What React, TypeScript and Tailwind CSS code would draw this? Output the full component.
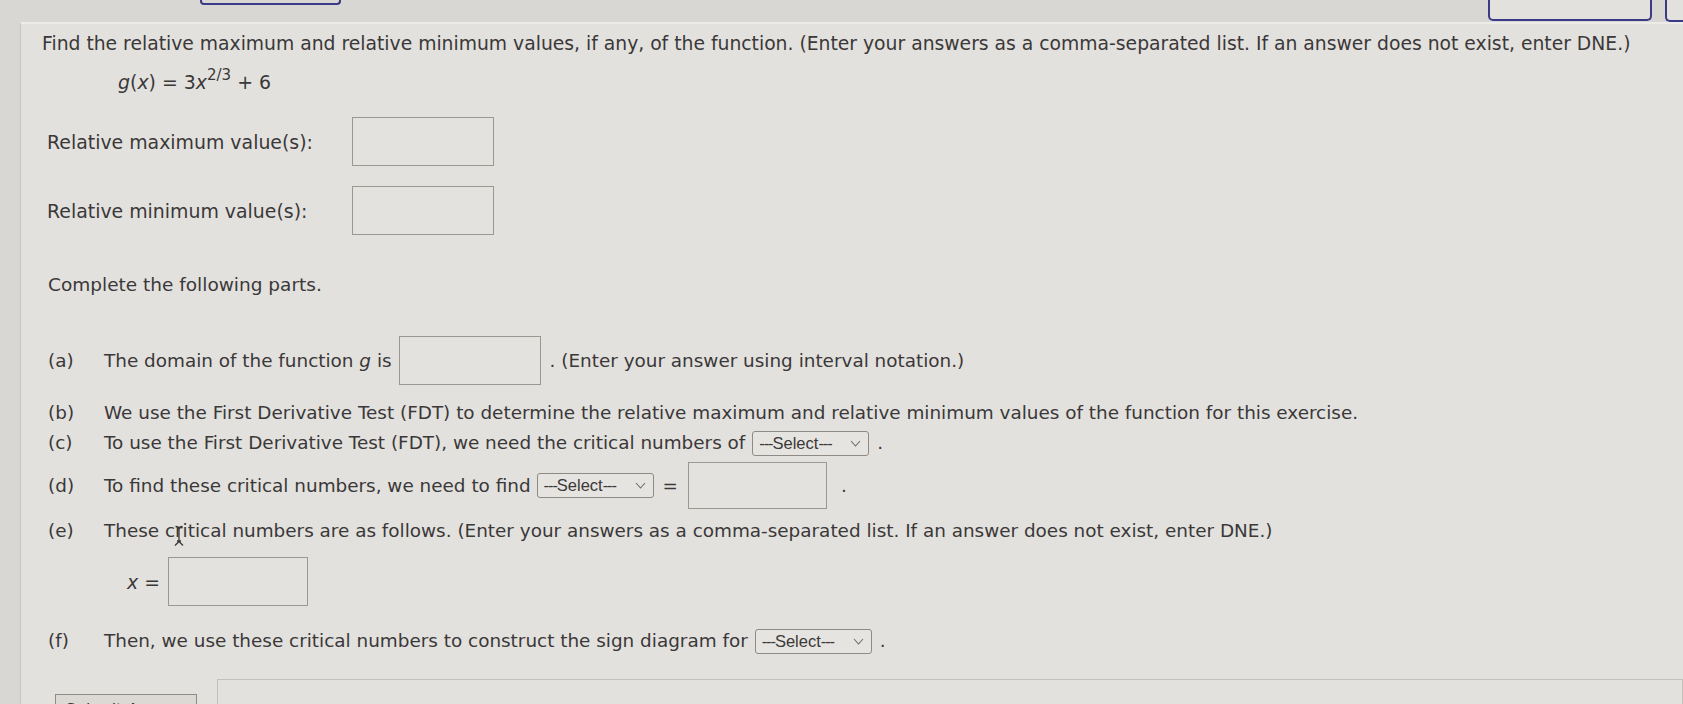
import React from 'react';

// Dropdown that looks like the WebAssign "---Select---" control
function SelectBox() {
  return (
    <div className="flex items-center justify-between h-[25px] w-[117px] pl-[6px] pr-[7px] border border-[#8e8b87] rounded-[3px] bg-[#e6e4e0] font-['Liberation_Sans',Arial,sans-serif] text-[16.5px] leading-none text-[#3a3839]">
      <span>
        <span className="tracking-[-1.1px]">---</span>Select<span className="tracking-[-1.1px]">---</span>
      </span>
      <svg width="11" height="7" viewBox="0 0 11 7" className="shrink-0">
        <polyline points="1,1 5.5,6 10,1" fill="none" stroke="#6d6b6a" strokeWidth="1.1" />
      </svg>
    </div>
  );
}

function AnswerBox({ className = '' }: { className?: string }) {
  return <div className={`border border-[#9b9894] bg-[#e4e2de] ${className}`} />;
}

function Part({ label, children, className = '' }: { label: string; children: React.ReactNode; className?: string }) {
  return (
    <div className={`flex items-center text-[18.4px] ${className}`}>
      <span className="w-[56px] shrink-0 ml-[6px]">({label})</span>
      {children}
    </div>
  );
}

export default function App() {
  return (
    <div className="w-[1683px] h-[704px] overflow-hidden bg-[#d9d7d3] font-['DejaVu_Sans',Verdana,sans-serif] text-[18.9px] leading-[24px] text-[#3a3839] relative">
      {/* toolbar buttons cut off at the top edge */}
      <div className="flex items-start h-[22px]">
        <div className="ml-[200px] w-[141px] h-[5px] border-x-2 border-b-2 border-[#3b3a86] rounded-b-[4px]" />
        <div className="ml-[1147px] w-[164px] h-[21px] overflow-hidden border-x-2 border-b-2 border-[#3b3a86] rounded-b-[5px] bg-[#e3e1dd]">
          <div className="-mt-[14px] text-center text-[15px] leading-[16px] text-[#3b3a86] tracking-wide">MY NOTES</div>
        </div>
        <div className="ml-[13px] flex-1 h-[22px] border-l-2 border-b-2 border-[#3b3a86] rounded-bl-[5px] bg-[#e3e1dd]" />
      </div>

      {/* question panel */}
      <div className="ml-[20px] h-full border-t-2 border-l border-t-[#eeece9] border-l-[#c9c6c1] bg-[#e3e1dd] pl-[21px] pt-[8px]">
        <p className="text-[18.75px]">
          Find the relative maximum and relative minimum values, if any, of the function. (Enter your answers as a
          comma-separated list. If an answer does not exist, enter DNE.)
        </p>

        <div className="mt-[14px] ml-[76px]">
          <i>g</i>(<i>x</i>) = 3<i>x</i>
          <sup className="text-[15px] relative -top-[9px]">2/3</sup> + 6
        </div>

        <div className="mt-[23px] flex items-center">
          <span className="ml-[5px] w-[305px] shrink-0">Relative maximum value(s):</span>
          <AnswerBox className="w-[142px] h-[49px]" />
        </div>

        <div className="mt-[20px] flex items-center">
          <span className="ml-[5px] w-[305px] shrink-0">Relative minimum value(s):</span>
          <AnswerBox className="w-[142px] h-[49px]" />
        </div>

        <p className="mt-[38px] ml-[6px] text-[18.5px]">Complete the following parts.</p>

        <Part label="a" className="mt-[39px] h-[49px]">
          <span>
            The domain of the function <i>g</i> is
          </span>
          <AnswerBox className="ml-[7px] w-[142px] h-[49px]" />
          <span className="ml-[9px]">. (Enter your answer using interval notation.)</span>
        </Part>

        <Part label="b" className="mt-[16px]">
          <span>
            We use the First Derivative Test (FDT) to determine the relative maximum and relative minimum values of the
            function for this exercise.
          </span>
        </Part>

        <Part label="c" className="mt-[5px] h-[26px]">
          <span>To use the First Derivative Test (FDT), we need the critical numbers of</span>
          <div className="ml-[7px]">
            <SelectBox />
          </div>
          <span className="ml-[8px]">.</span>
        </Part>

        <Part label="d" className="mt-[6px] h-[47px]">
          <span>To find these critical numbers, we need to find</span>
          <div className="ml-[6px]">
            <SelectBox />
          </div>
          <span className="ml-[9px]">=</span>
          <AnswerBox className="ml-[10px] w-[139px] h-[47px]" />
          <span className="ml-[14px]">.</span>
        </Part>

        <Part label="e" className="mt-[10px] relative">
          <span>
            These critical numbers are as follows. (Enter your answers as a comma-separated list. If an answer does not
            exist, enter DNE.)
          </span>
          {/* mouse cursor captured in the photo */}
          <svg width="12" height="22" viewBox="0 0 12 22" className="absolute left-[131px] top-[6px]">
            <path
              d="M2.5 1.5 Q6 1.5 6 4 Q6 1.5 9.5 1.5 M6 4 V16 M4 16 H8 M2 20.5 L6 16.5 L10 20.5"
              fill="none"
              stroke="#3a3839"
              strokeWidth="1.3"
            />
          </svg>
        </Part>

        <div className="mt-[14px] flex items-center h-[49px]">
          <span className="ml-[85px] w-[41px] shrink-0">
            <i>x</i> =
          </span>
          <AnswerBox className="w-[140px] h-[49px]" />
        </div>

        <Part label="f" className="mt-[22px] h-[26px] text-[18.2px]">
          <span>Then, we use these critical numbers to construct the sign diagram for</span>
          <div className="ml-[7px]">
            <SelectBox />
          </div>
          <span className="ml-[8px]">.</span>
        </Part>

        <div className="mt-[25px] flex items-start">
          <div className="ml-[13px] mt-[15px] w-[142px] h-[32px] border border-[#8f8c88] bg-[#dcd9d4] text-center text-[16px] leading-[30px]">
            Submit Answer
          </div>
          <div className="ml-[20px] flex-1 h-[60px] border border-[#c3c0bb] bg-[#e3e1dd]" />
        </div>
      </div>
    </div>
  );
}
